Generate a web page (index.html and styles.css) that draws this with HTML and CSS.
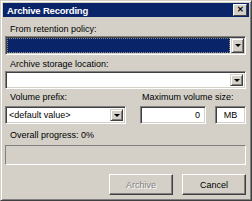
FILE: index.html
```html
<!DOCTYPE html>
<html lang="en">

<head>
  <meta charset="UTF-8" />
  <title>Archive Recording</title>
  <link rel="stylesheet" href="styles.css">
</head>

<body>
  <div class="window">
    <div class="titlebar">
      <span class="title">Archive Recording</span>
      <span class="close">&#x2715;</span>
    </div>
    <div class="content">
      <div class="field-label label-first">From retention policy:</div>
      <div class="combo combo-focus">
        <span class="combo-text"><span class="selected"></span></span>
        <span class="combo-btn"><span class="arrow"></span></span>
      </div>

      <div class="field-label label-second">Archive storage location:</div>
      <div class="combo">
        <span class="combo-text"></span>
        <span class="combo-btn"><span class="arrow"></span></span>
      </div>

      <div class="row">
        <div class="col-prefix">
          <div class="field-label">Volume prefix:</div>
          <div class="combo combo-small">
            <span class="combo-text">&lt;default value&gt;</span>
            <span class="combo-btn"><span class="arrow"></span></span>
          </div>
        </div>
        <div class="col-size">
          <div class="field-label label-size">Maximum volume size:</div>
          <div class="size-inputs">
            <div class="textbox size-box">0</div>
            <div class="textbox unit-box">MB</div>
          </div>
        </div>
      </div>

      <div class="field-label label-progress">Overall progress: 0%</div>
      <div class="progress"></div>

      <div class="buttons">
        <button class="btn btn-disabled">Archive</button>
        <button class="btn">Cancel</button>
      </div>
    </div>
  </div>
</body>

</html>
```

FILE: styles.css
```css
body {
  margin: 0;
  padding: 0;
  font-family: "Liberation Sans", Arial, sans-serif;
  font-size: 9px;
  background-color: #d4d0c8;
}

.window {
  width: 252px;
  height: 201px;
  box-sizing: border-box;
  background-color: #d4d0c8;
  border: 1px solid;
  border-color: #d4d0c8 #404040 #404040 #d4d0c8;
  box-shadow: inset 1px 1px #fff, inset -1px -1px #808080;
  padding: 2px;
}

.titlebar {
  height: 14px;
  background-color: #0a246a;
  display: flex;
  align-items: center;
  justify-content: space-between;
  padding: 0 2px 0 4px;
}

.title {
  color: #fff;
  font-weight: bold;
  font-size: 9.5px;
  letter-spacing: -0.2px;
}

.close {
  width: 12px;
  height: 10px;
  background-color: #d4d0c8;
  border: 1px solid;
  border-color: #fff #404040 #404040 #fff;
  font-size: 8px;
  font-weight: bold;
  line-height: 10px;
  text-align: center;
  color: #000;
}

.content {
  padding: 0 3px 0 2px;
}

.field-label {
  line-height: 11px;
  padding-left: 5px;
  color: #000;
}

.label-first {
  margin-top: 7px;
}

.label-second {
  margin-top: 4px;
}

.label-size {
  padding-left: 2px;
}

.label-progress {
  margin-top: 6px;
}

/* combo box */
.combo {
  height: 18px;
  box-sizing: border-box;
  margin-top: 1px;
  background-color: #fff;
  border: 1px solid;
  border-color: #808080 #fff #fff #808080;
  box-shadow: inset 1px 1px #404040, inset -1px -1px #d4d0c8;
  padding: 2px;
  display: flex;
}

.combo-focus {
  height: 19px;
  padding: 1px;
}

.combo-text {
  flex: 1;
  line-height: 12px;
  padding-left: 1px;
  display: flex;
}

.combo-focus .combo-text {
  padding-left: 0;
  margin-right: 1px;
}

.combo-focus .selected {
  flex: 1;
  background-color: #0a246a;
  border: 1px dotted #8a8a8a;
}

.combo-btn {
  width: 13px;
  box-sizing: border-box;
  background-color: #d4d0c8;
  border: 1px solid;
  border-color: #d4d0c8 #404040 #404040 #d4d0c8;
  box-shadow: inset 1px 1px #fff, inset -1px -1px #808080;
  display: flex;
  align-items: center;
  justify-content: center;
}

.arrow {
  width: 0;
  height: 0;
  border-left: 3px solid transparent;
  border-right: 3px solid transparent;
  border-top: 3px solid #000;
}

.row {
  display: flex;
  gap: 14px;
  margin-top: 3px;
}

.col-prefix {
  width: 121px;
}

.col-prefix .combo {
  margin-top: 3px;
}

.col-size {
  flex: 1;
}

.size-inputs {
  display: flex;
  gap: 9px;
  margin-top: 3px;
}

.textbox {
  height: 18px;
  box-sizing: border-box;
  background-color: #fff;
  border: 1px solid;
  border-color: #808080 #fff #fff #808080;
  box-shadow: inset 1px 1px #404040, inset -1px -1px #d4d0c8;
  line-height: 16px;
}

.size-box {
  width: 66px;
  text-align: right;
  padding-right: 5px;
}

.unit-box {
  flex: 1;
  text-align: center;
}

.progress {
  height: 20px;
  box-sizing: border-box;
  margin-top: 4px;
  border: 1px solid;
  border-color: #808080 #fff #fff #808080;
}

.buttons {
  display: flex;
  justify-content: flex-end;
  gap: 9px;
  margin-top: 9px;
}

.btn {
  width: 64px;
  height: 21px;
  font-family: "Liberation Sans", Arial, sans-serif;
  font-size: 9px;
  color: #000;
  background-color: #d4d0c8;
  border: 1px solid;
  border-color: #fff #404040 #404040 #fff;
  box-shadow: inset -1px -1px #808080;
  padding: 0;
}

.btn-disabled {
  color: #808080;
  text-shadow: 1px 1px #fff;
}
```
